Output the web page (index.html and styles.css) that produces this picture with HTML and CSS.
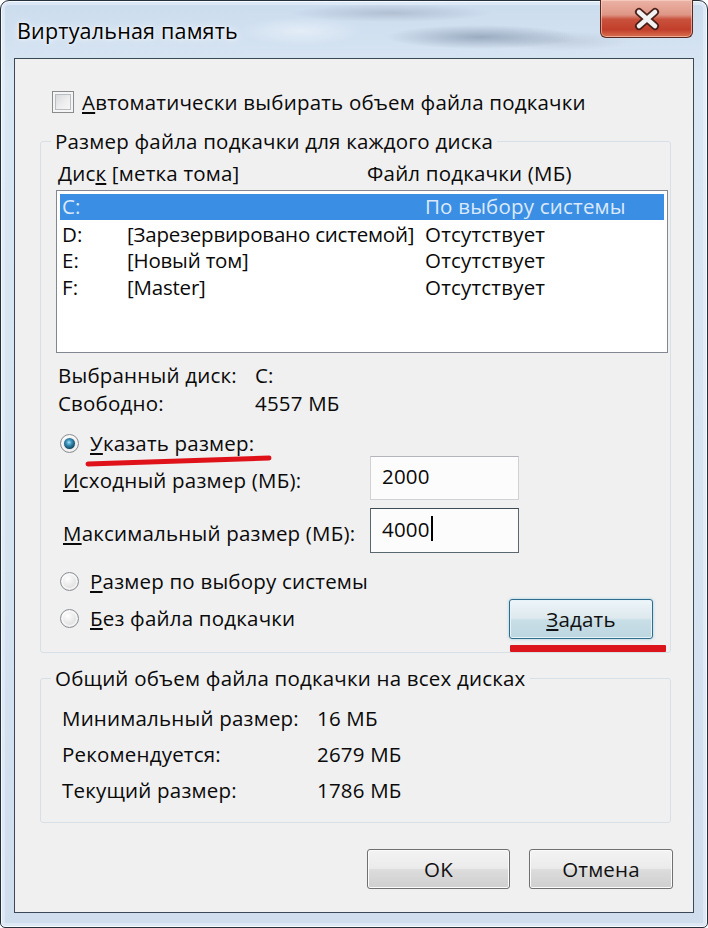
FILE: index.html
```html
<!DOCTYPE html>
<html lang="ru">
<head>
<meta charset="utf-8">
<title>Виртуальная память</title>
<link rel="stylesheet" href="styles.css">
</head>
<body>
<div class="window">
  <div class="titlebar">
    <span class="title">Виртуальная память</span>
    <button class="close" aria-label="Закрыть">
      <svg width="28" height="24" viewBox="0 0 28 24">
        <path d="M6 5 L22 19 M22 5 L6 19" stroke="#4a1f18" stroke-width="8" stroke-linecap="round"/>
        <path d="M6 5 L22 19 M22 5 L6 19" stroke="#f2f2f2" stroke-width="4.5" stroke-linecap="round"/>
      </svg>
    </button>
  </div>
  <div class="client">
    <div class="check-row"><span class="checkbox"></span><span><u>А</u>втоматически выбирать объем файла подкачки</span></div>

    <fieldset class="group">
      <legend>Размер файла подкачки для каждого диска</legend>
      <div class="group-body body-disks">
        <div class="list-head"><span class="col-head">Дис<u>к</u> [метка тома]</span><span>Файл подкачки (МБ)</span></div>
        <div class="listbox">
          <div class="row selected"><span class="c-drive">C:</span><span class="c-label"></span><span>По выбору системы</span></div>
          <div class="row"><span class="c-drive">D:</span><span class="c-label">[Зарезервировано системой]</span><span>Отсутствует</span></div>
          <div class="row"><span class="c-drive">E:</span><span class="c-label">[Новый том]</span><span>Отсутствует</span></div>
          <div class="row"><span class="c-drive">F:</span><span class="c-label">[Master]</span><span>Отсутствует</span></div>
        </div>
        <div class="info first"><span class="info-k">Выбранный диск:</span><span>C:</span></div>
        <div class="info"><span class="info-k">Свободно:</span><span>4557 МБ</span></div>

        <div class="radio-row top-radio"><span class="radio checked"></span><span class="annotated"><u>У</u>казать размер:<svg class="anno-stroke" viewBox="0 0 190 12"><path d="M3 9 Q 95 6 184 3" stroke="#df1219" stroke-width="5" fill="none" stroke-linecap="round"/></svg></span></div>
        <div class="field-row row-a"><span class="field-label"><u>И</u>сходный размер (МБ):</span><div class="textbox">2000</div></div>
        <div class="field-row row-b"><span class="field-label"><u>М</u>аксимальный размер (МБ):</span><div class="textbox focused">4000<span class="caret"></span></div></div>

        <div class="bottom-row">
          <div class="radios">
            <div class="radio-row"><span class="radio"></span><span><u>Р</u>азмер по выбору системы</span></div>
            <div class="radio-row"><span class="radio"></span><span><u>Б</u>ез файла подкачки</span></div>
          </div>
          <div class="set-wrap">
            <button class="btn btn-set"><u>З</u>адать</button>
            <span class="anno-bar"></span>
          </div>
        </div>
      </div>
    </fieldset>

    <fieldset class="group group-total">
      <legend>Общий объем файла подкачки на всех дисках</legend>
      <div class="group-body body-total">
        <div class="stat"><span class="stat-k">Минимальный размер:</span><span>16 МБ</span></div>
        <div class="stat"><span class="stat-k">Рекомендуется:</span><span>2679 МБ</span></div>
        <div class="stat"><span class="stat-k">Текущий размер:</span><span>1786 МБ</span></div>
      </div>
    </fieldset>

    <div class="actions">
      <button class="btn">OK</button>
      <button class="btn">Отмена</button>
    </div>
  </div>
</div>
</body>
</html>
```
FILE: styles.css
```css
* { box-sizing: border-box; }

html, body {
  margin: 0;
  padding: 0;
  background: #ffffff;
}

body {
  font-family: "Open Sans", "Noto Sans", sans-serif;
  font-size: 20.5px;
  letter-spacing: 0.2px;
  color: #0a0a0a;
}

u { text-decoration-thickness: 1.5px; text-underline-offset: 2px; }

.window {
  width: 708px;
  height: 928px;
  border: 1px solid #25303c;
  border-radius: 9px 9px 5px 5px;
  padding: 0 13px 14px;
  display: flex;
  flex-direction: column;
  background:
    radial-gradient(ellipse 95px 12px at 480px 36px, rgba(118, 135, 160, 0.6), rgba(118, 135, 160, 0) 100%),
    radial-gradient(ellipse 100px 9px at 390px 12px, rgba(150, 162, 182, 0.5), rgba(150, 162, 182, 0) 100%),
    radial-gradient(ellipse 70px 10px at 560px 40px, rgba(175, 188, 205, 0.5), rgba(175, 188, 205, 0) 100%),
    radial-gradient(ellipse 60px 14px at 300px 30px, rgba(235, 242, 250, 0.7), rgba(235, 242, 250, 0) 100%),
    linear-gradient(180deg, #cbdcee 0%, #d9e6f3 8%, #d6e3f1 60%, #cfdded 100%);
  box-shadow: inset 0 0 0 1px rgba(255, 255, 255, 0.75), inset 0 0 0 4px rgba(235, 243, 251, 0.5);
}

.titlebar {
  height: 57px;
  display: flex;
  align-items: flex-start;
  justify-content: space-between;
}

.title {
  margin: 18px 0 0 3px;
  line-height: 24px;
  font-size: 21.5px;
  color: #000;
  text-shadow: 0 0 8px rgba(255, 255, 255, 0.9), 0 0 3px rgba(255, 255, 255, 0.9);
}

.close {
  width: 93px;
  height: 38px;
  margin: -1px 1px 0 0;
  padding: 0;
  border: 1px solid #5b2820;
  border-top: none;
  border-radius: 0 0 6px 6px;
  background: linear-gradient(180deg, #eab3a6 0%, #df9686 40%, #c9523d 52%, #c23f2b 80%, #d9704f 100%);
  box-shadow: inset 0 0 0 1px rgba(255, 220, 210, 0.55);
  display: flex;
  align-items: center;
  justify-content: center;
}

.client {
  flex: 1;
  border: 1px solid #3c4855;
  background: #f0f0f0;
  padding: 0 22px 0 25px;
  display: flex;
  flex-direction: column;
}

.check-row {
  margin-top: 32px;
  height: 22px;
  display: flex;
  align-items: center;
  padding-left: 12px;
  gap: 8px;
  line-height: 22px;
}

.checkbox {
  width: 22px;
  height: 22px;
  border: 1px solid #8a8b8c;
  background: linear-gradient(135deg, #cfd2d6 0%, #eeeeee 55%, #fbfbfb 100%);
  box-shadow: inset 0 0 0 2px #f5f5f5, inset 0 0 0 3px #b9bdc2;
  flex: none;
}

/* Group boxes */
.group {
  margin: 16px 0 0;
  padding: 0;
  border: 1px solid #d8e0e5;
  border-radius: 3px;
  min-width: 0;
}

.group legend {
  margin-left: 10px;
  padding: 0 4px;
  line-height: 24px;
}

.group-total { margin-top: 13px; }

.body-disks {
  padding: 0 2px 13px 15px;
}

.list-head {
  margin-top: 8px;
  line-height: 24px;
  padding-left: 2px;
  display: flex;
}

.col-head { width: 309px; }

.listbox {
  margin-top: 5px;
  height: 163px;
  border: 1px solid #828790;
  background: #ffffff;
  padding: 3px;
}

.row {
  height: 26.5px;
  line-height: 26px;
  padding-left: 2px;
  display: flex;
  white-space: nowrap;
}

.row.selected {
  height: 25.5px;
  line-height: 25px;
  margin-bottom: 1px;
  background: #3a8fe4;
  color: #dce9fb;
}

.c-drive { width: 65px; }
.c-label { width: 298px; letter-spacing: -0.2px; }

.info {
  line-height: 28px;
  padding-left: 2px;
  display: flex;
}

.info.first { margin-top: 8px; }
.info-k { width: 197px; }

.radio-row {
  height: 24px;
  display: flex;
  align-items: center;
  padding-left: 4px;
  gap: 11px;
  line-height: 24px;
  white-space: nowrap;
}

.top-radio { margin-top: 14px; }

.radio {
  width: 19px;
  height: 19px;
  border-radius: 50%;
  border: 1px solid #8b8e93;
  background: radial-gradient(circle at 40% 35%, #ffffff 0%, #e9e9e9 45%, #cfd1d4 100%);
  box-shadow: inset 0 0 0 2px rgba(255, 255, 255, 0.6);
  flex: none;
  display: flex;
  align-items: center;
  justify-content: center;
}

.radio.checked::after {
  content: "";
  width: 11px;
  height: 11px;
  border-radius: 50%;
  background: radial-gradient(circle at 45% 40%, #a9e1f5 0%, #3c93bd 30%, #124b66 70%, #0b3347 100%);
}

.annotated { position: relative; }

.anno-stroke {
  position: absolute;
  left: -5px;
  top: 24px;
  width: 190px;
  height: 12px;
  overflow: visible;
}

.field-row {
  display: flex;
  align-items: center;
  padding-left: 7px;
  white-space: nowrap;
}

.row-a { margin-top: 1px; height: 44px; }
.row-b { margin-top: 8px; height: 45px; }

.field-label { width: 307px; padding-top: 4px; }

.textbox {
  width: 149px;
  height: 100%;
  background: #fcfcfc;
  border: 1px solid #d0d2d6;
  border-top-color: #b3b5ba;
  padding-left: 11px;
  display: flex;
  align-items: center;
  padding-bottom: 4px;
}

.textbox.focused {
  border-color: #5b676e;
  border-top-color: #3f4b52;
}

.caret {
  display: inline-block;
  width: 2px;
  height: 25px;
  background: #000;
  margin-left: 1px;
}

.bottom-row {
  margin-top: 16px;
  display: flex;
  justify-content: space-between;
  align-items: flex-start;
}

.radios {
  display: flex;
  flex-direction: column;
  gap: 13px;
}

.set-wrap {
  position: relative;
  margin: 30px 15px 0 0;
}

.btn {
  font: inherit;
  letter-spacing: inherit;
  color: #111;
  width: 144px;
  height: 40px;
  padding: 0;
  border: 1px solid #707070;
  border-radius: 3px;
  background: linear-gradient(180deg, #f3f3f3 0%, #ebebeb 48%, #dcdcdc 52%, #cfcfcf 100%);
  box-shadow: inset 0 0 0 1px #fbfbfb;
}

.btn-set {
  display: block;
  border-color: #2f6d8c;
  background: linear-gradient(180deg, #edf5f8 0%, #dde9ee 48%, #c9dfe7 52%, #bcd6e0 100%);
  box-shadow: inset 0 0 0 1px #e6f4fa, 0 0 3px rgba(80, 170, 210, 0.5);
}

.anno-bar {
  position: absolute;
  left: 1px;
  top: 46px;
  width: 156px;
  height: 7px;
  background: #dc141c;
  border-radius: 1px;
}

/* Totals */
.body-total {
  padding: 10px 0 14px 21px;
}

.stat {
  line-height: 36px;
  display: flex;
}

.stat-k { width: 255px; }

.actions {
  margin: 26px -2px 0 0;
  display: flex;
  justify-content: flex-end;
  gap: 19px;
}

.actions .btn:first-child { width: 143px; }
```
